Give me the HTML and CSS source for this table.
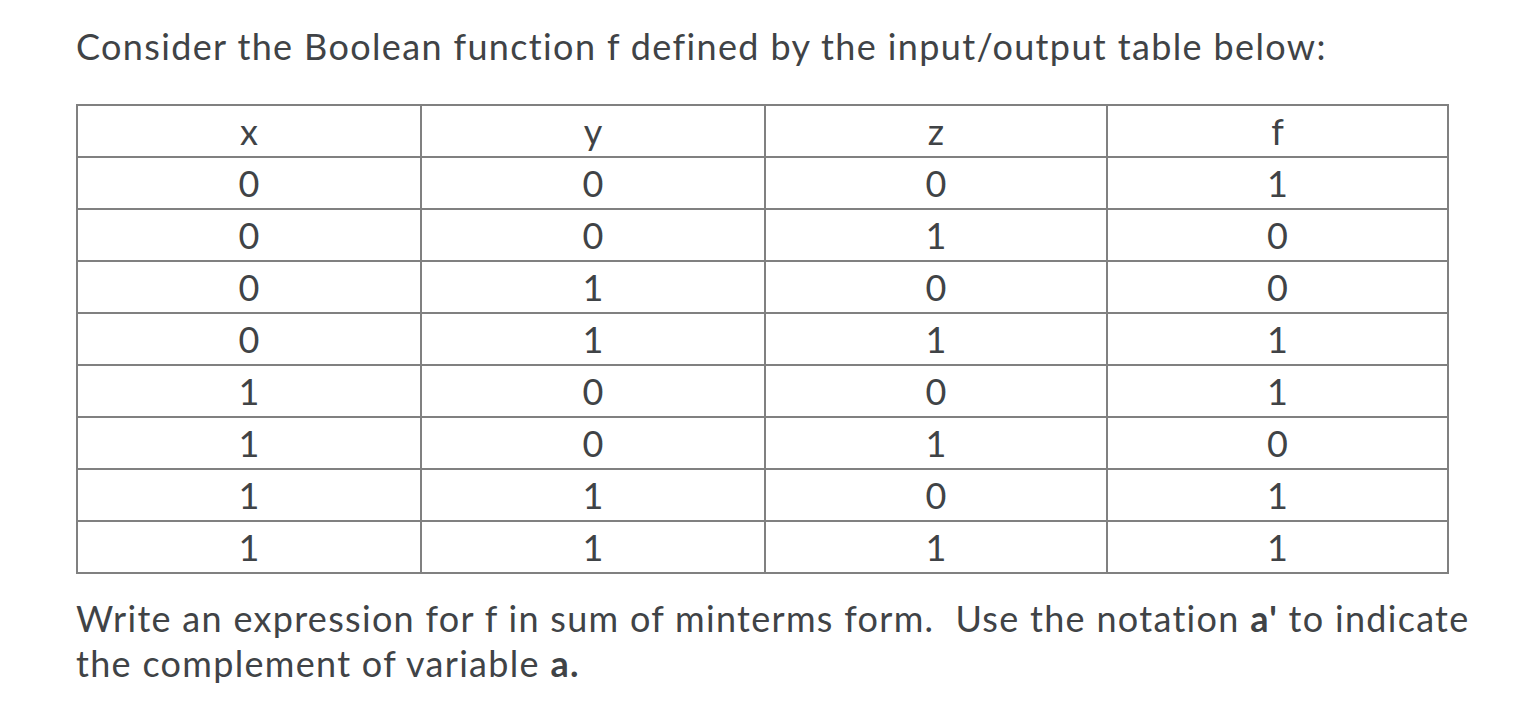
FILE: index.html
```html
<!DOCTYPE html>
<html>
<head>
<meta charset="utf-8">
<link rel="stylesheet" href="styles.css">
</head>
<body>
<div class="page">
  <p class="intro">Consider the Boolean function f defined by the input/output table below:</p>
  <table class="truth">
    <colgroup><col class="c1"><col class="c2"><col class="c3"><col class="c4"></colgroup>
    <tr><td>x</td><td>y</td><td>z</td><td>f</td></tr>
    <tr><td>0</td><td>0</td><td>0</td><td>1</td></tr>
    <tr><td>0</td><td>0</td><td>1</td><td>0</td></tr>
    <tr><td>0</td><td>1</td><td>0</td><td>0</td></tr>
    <tr><td>0</td><td>1</td><td>1</td><td>1</td></tr>
    <tr><td>1</td><td>0</td><td>0</td><td>1</td></tr>
    <tr><td>1</td><td>0</td><td>1</td><td>0</td></tr>
    <tr><td>1</td><td>1</td><td>0</td><td>1</td></tr>
    <tr><td>1</td><td>1</td><td>1</td><td>1</td></tr>
  </table>
  <p class="question">Write an expression for f in sum of minterms form.&nbsp; Use the notation <b>a'</b> to indicate the complement of variable <b>a.</b></p>
</div>
</body>
</html>
```

FILE: styles.css
```css
html, body {
  margin: 0;
  padding: 0;
  background: #ffffff;
}
.page {
  padding: 24px 0 0 76px;
  font-family: Lato, "Open Sans", sans-serif;
  font-size: 36px;
  line-height: 45px;
  letter-spacing: 1.3px;
  font-variant-ligatures: none;
  color: #404346;
}
.intro {
  margin: 0;
  letter-spacing: 1.36px;
}
.truth {
  margin-top: 35px;
  width: 1373px;
  table-layout: fixed;
  border-collapse: separate;
  border-spacing: 0;
  border-top: 2px solid #808080;
  border-left: 2px solid #808080;
}
.c1, .c2 { width: 344px; }
.c3 { width: 342px; }
.c4 { width: 341px; }
.truth td {
  box-sizing: border-box;
  height: 52px;
  padding: 0;
  text-align: center;
  vertical-align: middle;
  line-height: 50px;
  letter-spacing: 0;
  border-right: 2px solid #808080;
  border-bottom: 2px solid #808080;
}
.question {
  margin: 22px 0 0 0;
  width: 1410px;
}
.question b {
  font-weight: 700;
}
```
